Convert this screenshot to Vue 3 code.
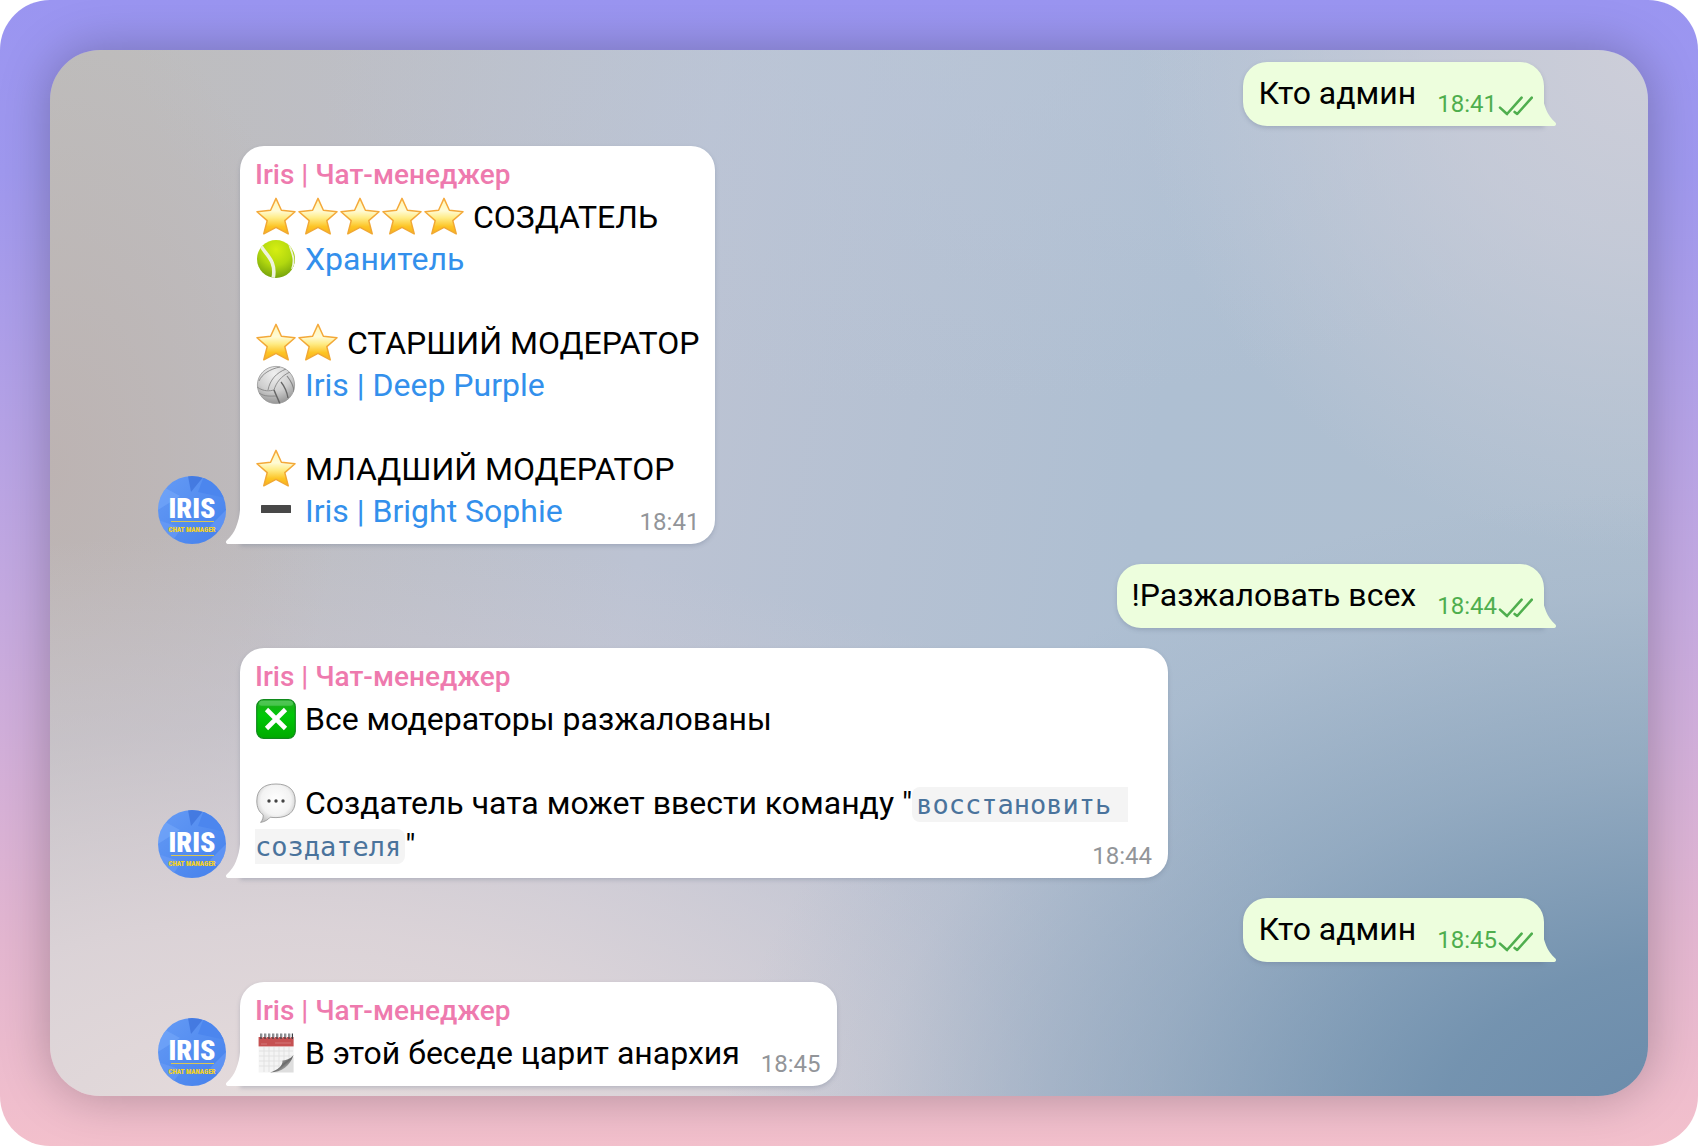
<template>
  <main class="frame">
    <!-- emoji -->
    <svg class="sprite" aria-hidden="true">
      <defs>
        <linearGradient id="star-fill" x1="0" y1="0" x2="0" y2="1">
          <stop offset="0" stop-color="#fff6b0" />
          <stop offset="0.35" stop-color="#fffbd6" />
          <stop offset="0.55" stop-color="#ffec86" />
          <stop offset="0.8" stop-color="#fdc424" />
          <stop offset="1" stop-color="#f9b21a" />
        </linearGradient>
        <linearGradient id="star-edge" x1="0" y1="0" x2="0" y2="1">
          <stop offset="0" stop-color="#f5a93c" />
          <stop offset="1" stop-color="#f0a832" />
        </linearGradient>
        <radialGradient id="tennis-fill" cx="0.5" cy="0.25" r="0.75">
          <stop offset="0" stop-color="#d6ee12" />
          <stop offset="0.55" stop-color="#b2d80f" />
          <stop offset="1" stop-color="#76a30c" />
        </radialGradient>
        <radialGradient id="volley-fill" cx="0.45" cy="0.2" r="0.85">
          <stop offset="0" stop-color="#f0f0f0" />
          <stop offset="0.55" stop-color="#cfcfcf" />
          <stop offset="1" stop-color="#8e8e8e" />
        </radialGradient>
        <linearGradient id="green-fill" x1="0" y1="0" x2="0" y2="1">
          <stop offset="0" stop-color="#2fb834" />
          <stop offset="0.2" stop-color="#12b512" />
          <stop offset="0.4" stop-color="#00c808" />
          <stop offset="1" stop-color="#00aa00" />
        </linearGradient>
        <radialGradient id="speech-fill" cx="0.5" cy="0.42" r="0.6">
          <stop offset="0" stop-color="#ffffff" />
          <stop offset="0.65" stop-color="#f3f3f3" />
          <stop offset="1" stop-color="#c4c4c4" />
        </radialGradient>
        <linearGradient id="curl-fill" x1="0" y1="0" x2="1" y2="1">
          <stop offset="0.2" stop-color="#f8f8f8" />
          <stop offset="0.55" stop-color="#6a6a6a" />
          <stop offset="0.8" stop-color="#cccccc" />
        </linearGradient>
        <linearGradient id="avatar-fill" x1="0" y1="0" x2="1" y2="1">
          <stop offset="0" stop-color="#659bf5" />
          <stop offset="1" stop-color="#4480ec" />
        </linearGradient>
        <clipPath id="avatar-clip"><circle cx="34" cy="34" r="34" /></clipPath>
        <clipPath id="ball-clip"><circle cx="20" cy="20" r="19" /></clipPath>
      </defs>

      <symbol id="emoji-star" viewBox="0 0 40 40">
        <path
          d="M20 1.4 L25.4 13.2 L39 14.8 L28.8 23.6 L32.2 36.8 L20 30.4 L7.8 36.8 L11.2 23.6 L1 14.8 L14.6 13.2 Z"
          fill="url(#star-fill)"
          stroke="url(#star-edge)"
          stroke-width="1.5"
          stroke-linejoin="round"
        />
      </symbol>

      <symbol id="emoji-tennis" viewBox="0 0 40 40">
        <circle cx="20" cy="20" r="19" fill="url(#tennis-fill)" />
        <g clip-path="url(#ball-clip)" fill="none" stroke="#eef3dc">
          <path d="M5 7 C10 16 21 22 17 40" stroke-width="3.6" />
          <path d="M33 4 C35 14 40 18 36 30" stroke-width="1.8" />
        </g>
      </symbol>

      <symbol id="emoji-volley" viewBox="0 0 40 40">
        <circle cx="20" cy="20" r="18.6" fill="url(#volley-fill)" stroke="#999999" stroke-width="0.8" />
        <g clip-path="url(#ball-clip)" fill="none" stroke="#858585" stroke-width="0.9">
          <path d="M1 22 C8 27 14 26 18 25 C20 18 25 11 34 7" />
          <path d="M18 25 C20 30 22 34 24 39" stroke="#666666" stroke-width="1.5" />
          <path d="M3 16 C6 9 14 4 24 2" />
          <path d="M12 25 C14 15 20 8 30 4" />
          <path d="M3 28 C9 32 15 31 20 31" />
          <path d="M25 17 C29 22 31 27 32 33" stroke="#666666" stroke-width="1.3" />
          <path d="M31 11 C35 16 38 22 38 27" stroke-width="1.2" />
        </g>
      </symbol>

      <symbol id="emoji-minus" viewBox="0 0 40 40">
        <rect x="5" y="14" width="30" height="8" rx="0.6" fill="#484848" />
      </symbol>

      <symbol id="emoji-cross" viewBox="0 0 40 40">
        <rect x="0.7" y="0.7" width="38.6" height="38.6" rx="7" fill="url(#green-fill)" stroke="#108a1c" stroke-width="1.2" />
        <rect x="3" y="1.8" width="34" height="5" rx="2.5" fill="#7fd684" opacity="0.45" />
        <path d="M10.5 10.5 L29.5 29.5 M29.5 10.5 L10.5 29.5" stroke="#ffffff" stroke-width="4.6" />
      </symbol>

      <symbol id="emoji-speech" viewBox="0 0 40 40">
        <path
          d="M20 1 C32 1 39.2 6.4 39.2 18 C39.2 29 32 34.6 20 34.6 C18 34.6 16 34.5 14.2 34.2 C12 36.8 9 38.6 4.6 39.4 C6.6 37 7.4 34.8 7.2 31.8 C3 29 0.8 24.4 0.8 18 C0.8 6.4 8 1 20 1 Z"
          fill="url(#speech-fill)"
          stroke="#9c9c9c"
          stroke-width="0.9"
        />
        <g fill="#444444">
          <circle cx="13" cy="18" r="1.7" />
          <circle cx="20" cy="18" r="1.7" />
          <circle cx="27" cy="18" r="1.7" />
        </g>
      </symbol>

      <symbol id="emoji-calendar" viewBox="0 0 40 40">
        <path d="M2.6 4 H37.6 V25 L22 39.6 H2.6 Z" fill="#f4f4f4" />
        <path
          d="M8 14 V39 M13 14 V39 M18 14 V39 M23 14 V38 M28 14 V33 M33 14 V29 M3 18 H37 M3 23 H37 M3 28 H33 M3 33 H28"
          stroke="#dedede"
          stroke-width="0.8"
        />
        <rect x="2.6" y="4" width="35" height="9.4" fill="#c65152" />
        <path d="M5 11 H11 M19 10 H35" stroke="#d47878" stroke-width="1.2" />
        <path d="M37.6 24 V39.6 H14 C24 38 31 33 37.6 24 Z" fill="#dedede" />
        <path d="M37.6 22 C34 26 31 27 26.4 27.6 C27 33 22 37 14 39.6 C26 39 34 33 37.6 22 Z" fill="url(#curl-fill)" />
        <path
          d="M5 0.6 V6 M9 0.6 V6 M13 0.6 V6 M17 0.6 V6 M21 0.6 V6 M25 0.6 V6 M29 0.6 V6 M33 0.6 V6 M36.4 0.6 V6"
          stroke="#3c3f44"
          stroke-width="1.2"
        />
        <path
          d="M6.4 0.6 V5 M10.4 0.6 V5 M14.4 0.6 V5 M18.4 0.6 V5 M22.4 0.6 V5 M26.4 0.6 V5 M30.4 0.6 V5 M34.4 0.6 V5"
          stroke="#c9ccd0"
          stroke-width="0.9"
        />
      </symbol>
    </svg>

    <section class="chat">
      <article
        v-for="message in messages"
        :key="message.id"
        class="row"
        :class="message.out ? 'row-out' : 'row-in'"
      >
        <svg v-if="!message.out" class="avatar" viewBox="0 0 68 68" role="img" aria-label="Iris">
          <g clip-path="url(#avatar-clip)">
            <rect width="68" height="68" fill="url(#avatar-fill)" />
            <path d="M33 16 L30 0 H46 Z" fill="#3f74dc" opacity="0.8" />
            <path d="M46 0 L40 16 L68 22 V0 Z" fill="#4c86ee" />
            <path d="M0 8 L22 20 L0 34 Z" fill="#7aabfb" opacity="0.5" />
            <path d="M0 44 L24 52 L12 68 H0 Z" fill="#6fa0f8" opacity="0.5" />
            <path d="M68 34 L52 50 L68 60 Z" fill="#6a9df6" opacity="0.6" />
          </g>
          <text x="34" y="42" class="logo-name">IRIS</text>
          <rect x="13" y="45" width="43" height="1" fill="#d9c552" />
          <text x="34" y="56" class="logo-sub">CHAT MANAGER</text>
        </svg>

        <div class="bubble">
          <h2 v-if="!message.out" class="author">{{ author }}</h2>
          <div v-for="(line, i) in message.lines" :key="i" class="line">
            <template v-for="(part, j) in line" :key="j">
              <svg v-if="part.emoji" class="emoji" aria-hidden="true"><use :href="`#emoji-${part.emoji}`" /></svg>
              <a v-else-if="part.link" href="#">{{ part.link }}</a>
              <code v-else-if="part.code">{{ part.code }}</code>
              <template v-else>{{ part.text }}</template>
            </template>
            <span v-if="i === message.lines.length - 1" class="meta">
              <time>{{ message.time }}</time>
              <svg v-if="message.out" class="checks" viewBox="0 0 36 20" aria-hidden="true">
                <path d="M3 11.6 L10 18 L24.6 1.6 M17.6 16 L20.2 18 L34.8 1.6" />
              </svg>
            </span>
          </div>
          <svg class="tail" viewBox="0 0 9 17" aria-hidden="true">
            <path
              v-if="message.out"
              d="M6 17H0V0c.193 2.84.876 5.767 2.05 8.782.904 2.325 2.446 4.485 4.625 6.48A1 1 0 016 17z"
            />
            <path
              v-else
              d="M3 17h6V0c-.193 2.84-.876 5.767-2.05 8.782-.904 2.325-2.446 4.485-4.625 6.48A1 1 0 003 17z"
            />
          </svg>
        </div>
      </article>
    </section>
  </main>
</template>

<script setup>
const author = 'Iris | Чат-менеджер'

const stars = (count) => Array.from({ length: count }, () => ({ emoji: 'star' }))

const messages = [
  { id: 1, out: true, time: '18:41', lines: [[{ text: 'Кто админ' }]] },
  {
    id: 2,
    out: false,
    time: '18:41',
    lines: [
      [...stars(5), { text: ' СОЗДАТЕЛЬ' }],
      [{ emoji: 'tennis' }, { text: ' ' }, { link: 'Хранитель' }],
      [],
      [...stars(2), { text: ' СТАРШИЙ МОДЕРАТОР' }],
      [{ emoji: 'volley' }, { text: ' ' }, { link: 'Iris | Deep Purple' }],
      [],
      [...stars(1), { text: ' МЛАДШИЙ МОДЕРАТОР' }],
      [{ emoji: 'minus' }, { text: ' ' }, { link: 'Iris | Bright Sophie' }]
    ]
  },
  { id: 3, out: true, time: '18:44', lines: [[{ text: '!Разжаловать всех' }]] },
  {
    id: 4,
    out: false,
    time: '18:44',
    lines: [
      [{ emoji: 'cross' }, { text: ' Все модераторы разжалованы' }],
      [],
      [
        { emoji: 'speech' },
        { text: ' Создатель чата может ввести команду "' },
        { code: 'восстановить создателя' },
        { text: '"' }
      ]
    ]
  },
  { id: 5, out: true, time: '18:45', lines: [[{ text: 'Кто админ' }]] },
  {
    id: 6,
    out: false,
    time: '18:45',
    lines: [[{ emoji: 'calendar' }, { text: ' В этой беседе царит анархия' }]]
  }
]
</script>

<style>
body {
  margin: 0;
  background: #ffffff;
}
</style>

<style scoped>
.frame {
  box-sizing: border-box;
  display: flex;
  min-height: 100vh;
  padding: 50px;
  border-radius: 50px;
  background: linear-gradient(#9a95f1 0%, #9f98ee 15%, #c4a9e0 52%, #e3b6d0 82%, #f3c0cc 100%);
  font-family: Roboto, 'Noto Sans', sans-serif;
  font-size: 32px;
  line-height: 42px;
  color: #000000;
}
.sprite {
  position: absolute;
  width: 0;
  height: 0;
}
.chat {
  flex: 1;
  display: flex;
  flex-direction: column;
  gap: 20px;
  padding: 12px 104px 10px 108px;
  border-radius: 50px;
  background:
    radial-gradient(ellipse 62% 62% at 104% 104%, #6889a9 0%, rgba(108, 141, 171, 0.88) 28%, rgba(120, 150, 178, 0.5) 58%, rgba(140, 165, 190, 0.15) 85%, rgba(150, 172, 195, 0) 100%),
    radial-gradient(ellipse 32% 48% at 100% 0%, #cdced9 0%, rgba(203, 205, 217, 0.75) 40%, rgba(200, 204, 217, 0) 100%),
    radial-gradient(ellipse 72% 58% at 14% 104%, #e6dcdc 0%, rgba(222, 213, 217, 0.9) 35%, rgba(208, 203, 213, 0.5) 68%, rgba(200, 200, 214, 0) 100%),
    radial-gradient(ellipse 18% 45% at 0% 40%, rgba(188, 178, 177, 0.9) 0%, rgba(188, 178, 177, 0) 100%),
    radial-gradient(ellipse 50% 34% at 55% 0%, rgba(186, 198, 216, 0.6) 0%, rgba(186, 198, 216, 0) 100%),
    linear-gradient(100deg, #bebdbc 0%, #bebdc1 16%, #bcc3d3 38%, #aebfd2 66%, #afbfcf 100%);
  box-shadow: 0 0 50px rgba(0, 0, 0, 0.26);
}
.row {
  display: flex;
  align-items: flex-end;
  gap: 14px;
}
.row-out {
  justify-content: flex-end;
}
.avatar {
  flex: none;
  width: 68px;
  height: 68px;
}
.logo-name,
.logo-sub {
  font-family: 'Roboto Condensed', 'Liberation Sans Narrow', 'DejaVu Sans Condensed', sans-serif;
  font-weight: 900;
  text-anchor: middle;
}
.logo-name {
  font-size: 28px;
  fill: #ffffff;
}
.logo-sub {
  font-size: 7px;
  fill: #f5d21f;
}
.bubble {
  position: relative;
  box-sizing: border-box;
  max-width: 928px;
  padding: 10px 16px 12px 15px;
  border-radius: 24px;
  background: #ffffff;
  box-shadow: 0 2px 4px rgba(90, 105, 130, 0.28);
}
.row-in .bubble {
  border-bottom-left-radius: 0;
}
.row-out .bubble {
  padding-right: 11px;
  border-bottom-right-radius: 0;
  background: #edfedd;
}
.author {
  margin: 0 0 2px;
  font-size: 28px;
  font-weight: 500;
  line-height: 38px;
  color: #ee7aae;
}
.line {
  min-height: 42px;
  white-space: pre-wrap;
}
.line a {
  color: #3390ec;
  text-decoration: none;
}
.line code {
  padding: 2px 4px;
  border-radius: 8px;
  background: #f4f4f4;
  font-family: 'DejaVu Sans Mono', monospace;
  font-size: 27px;
  line-height: 36px;
  color: #4a739c;
}
.emoji {
  width: 40px;
  height: 40px;
  margin: 0 1px;
  vertical-align: -9px;
}
.meta {
  float: right;
  display: flex;
  align-items: flex-start;
  height: 20px;
  margin: 22px 0 0 21px;
  font-size: 24px;
  line-height: 20px;
  color: #929599;
}
.row-out .meta {
  color: #4fae4e;
}
.checks {
  width: 36px;
  height: 20px;
  margin-top: 2px;
  fill: none;
  stroke: #4fae4e;
  stroke-width: 2.6;
  stroke-linecap: round;
  stroke-linejoin: round;
}
.tail {
  position: absolute;
  bottom: 0;
  width: 18px;
  height: 34px;
}
.row-in .tail {
  right: 100%;
  fill: #ffffff;
}
.row-out .tail {
  left: calc(100% - 2px);
  fill: #edfedd;
}
</style>
